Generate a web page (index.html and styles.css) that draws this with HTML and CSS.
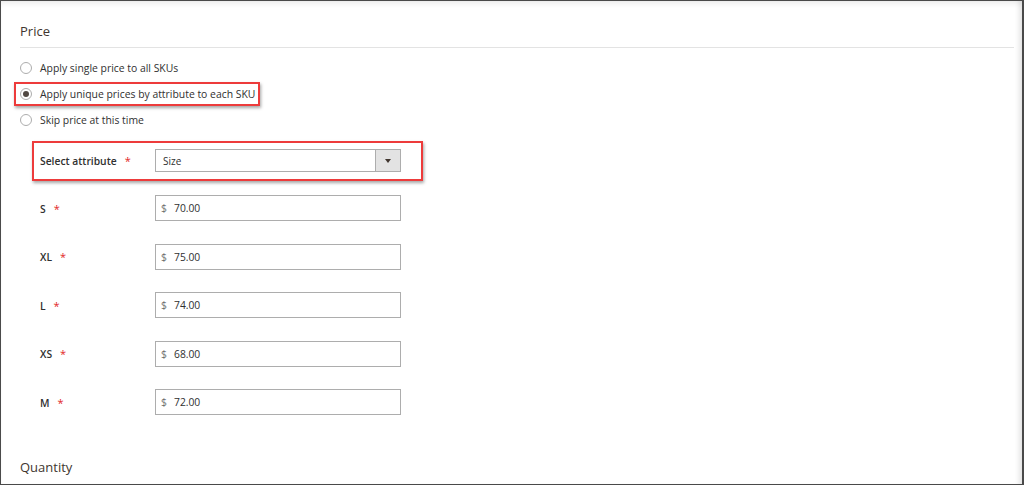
FILE: index.html
```html
<!DOCTYPE html>
<html>
<head>
<meta charset="utf-8">
<link rel="stylesheet" href="styles.css">
</head>
<body>
<div class="frame">
  <div class="section">
    <h2 class="heading">Price</h2>
    <div class="radios">
      <label class="radio-row"><span class="radio"></span><span>Apply single price to all SKUs</span></label>
      <label class="radio-row hl"><span class="radio checked"></span><span>Apply unique prices by attribute to each SKU</span></label>
      <label class="radio-row"><span class="radio"></span><span>Skip price at this time</span></label>
    </div>
    <div class="attr-box">
      <div class="field-label">Select attribute<span class="req">*</span></div>
      <div class="select">
        <span class="select-value">Size</span>
        <span class="select-btn"><span class="tri"></span></span>
      </div>
    </div>
    <div class="prices">
      <div class="price-row"><div class="field-label">S<span class="req">*</span></div><div class="input"><span class="cur">$</span><span class="val">70.00</span></div></div>
      <div class="price-row"><div class="field-label">XL<span class="req">*</span></div><div class="input"><span class="cur">$</span><span class="val">75.00</span></div></div>
      <div class="price-row"><div class="field-label">L<span class="req">*</span></div><div class="input"><span class="cur">$</span><span class="val">74.00</span></div></div>
      <div class="price-row"><div class="field-label">XS<span class="req">*</span></div><div class="input"><span class="cur">$</span><span class="val">68.00</span></div></div>
      <div class="price-row"><div class="field-label">M<span class="req">*</span></div><div class="input"><span class="cur">$</span><span class="val">72.00</span></div></div>
    </div>
    <h2 class="heading quantity">Quantity</h2>
  </div>
</div>
</body>
</html>
```
FILE: styles.css
```css
html, body {
  margin: 0;
  padding: 0;
  background: #fff;
}
body {
  font-family: "Open Sans", "Noto Sans", "Liberation Sans", sans-serif;
  color: #303030;
}
.frame {
  width: 1024px;
  height: 485px;
  box-sizing: border-box;
  border: 1px solid #4a4a4a;
  border-right-width: 2px;
  overflow: hidden;
  box-shadow: inset 0 5px 6px -3px rgba(0,0,0,0.09), inset -6px 0 5px -3px rgba(0,0,0,0.10);
  padding-top: 21px;
}
.section {
  padding: 0 8px 0 19px;
}
.heading {
  margin: 0;
  font-weight: 400;
  font-size: 13px;
  line-height: 18px;
  color: #41362f;
  padding-bottom: 7px;
  border-bottom: 1px solid #e3e3e3;
}
.heading.quantity {
  border-bottom: none;
  margin-top: 43px;
}
.radios {
  margin-top: 7px;
  display: flex;
  flex-direction: column;
}
.radio-row {
  display: flex;
  align-items: center;
  height: 26px;
  font-size: 10.4px;
  color: #303030;
  box-sizing: border-box;
  width: fit-content;
}
.radio-row.hl {
  height: 24px;
  margin: 1px 0 1px -6px;
  padding: 0 3px 0 4px;
  border: 2px solid #ed3b3b;
  box-shadow: 1px 2px 3px rgba(0,0,0,0.35);
}
.radio {
  width: 12px;
  height: 12px;
  box-sizing: border-box;
  border: 1px solid #adadad;
  border-radius: 50%;
  margin-right: 8px;
  background: #fff;
  display: flex;
  align-items: center;
  justify-content: center;
}
.radio.checked::after {
  content: "";
  width: 6px;
  height: 6px;
  border-radius: 50%;
  background: #514943;
}
.field-label {
  width: 115px;
  flex-shrink: 0;
  font-size: 10.3px;
  font-weight: 600;
  color: #303030;
}
.req {
  color: #e22626;
  font-weight: 400;
  margin-left: 8px;
  font-size: 11px;
}
.attr-box {
  margin: 8px 0 0 12px;
  width: 391px;
  box-sizing: border-box;
  border: 2px solid #ed3b3b;
  box-shadow: 1px 2px 3px rgba(0,0,0,0.35);
  padding: 6px 20px 7px 6px;
  display: flex;
  align-items: center;
}
.select {
  width: 246px;
  height: 23px;
  box-sizing: border-box;
  border: 1px solid #adadad;
  display: flex;
  align-items: center;
}
.select-value {
  flex: 1;
  padding-left: 7px;
  font-size: 10px;
  color: #303030;
}
.select-btn {
  width: 24px;
  height: 100%;
  background: #e3e3e3;
  border-left: 1px solid #adadad;
  display: flex;
  align-items: center;
  justify-content: center;
}
.tri {
  width: 0;
  height: 0;
  border-left: 3px solid transparent;
  border-right: 3px solid transparent;
  border-top: 4px solid #41362f;
}
.prices {
  margin-top: 14px;
  display: flex;
  flex-direction: column;
  gap: 22.5px;
}
.price-row {
  display: flex;
  align-items: center;
  padding-left: 20px;
}
.input {
  width: 246px;
  height: 26px;
  box-sizing: border-box;
  border: 1px solid #adadad;
  display: flex;
  align-items: center;
  font-size: 10.3px;
  padding-left: 5px;
}
.cur {
  color: #6f6f6f;
  width: 13px;
}
.val {
  color: #303030;
}
```
